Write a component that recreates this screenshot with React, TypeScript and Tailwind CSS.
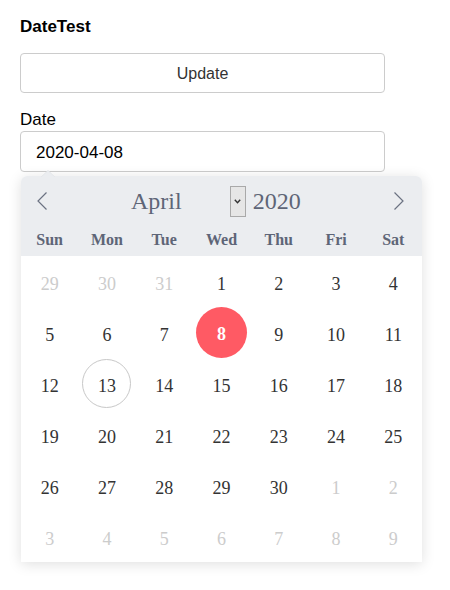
import React from "react";

const weekdays = ["Sun", "Mon", "Tue", "Wed", "Thu", "Fri", "Sat"];

type Day = { n: number; muted?: boolean };

const days: Day[] = [
  { n: 29, muted: true },
  { n: 30, muted: true },
  { n: 31, muted: true },
  ...Array.from({ length: 30 }, (_, i) => ({ n: i + 1 })),
  ...Array.from({ length: 9 }, (_, i) => ({ n: i + 1, muted: true })),
];

function Chevron({ dir }: { dir: "left" | "right" }) {
  return (
    <svg width="10" height="18" viewBox="0 0 10 18" fill="none" className="shrink-0">
      <path
        d={dir === "left" ? "M9.5 0.5 L1 9 L9.5 17.5" : "M0.5 0.5 L9 9 L0.5 17.5"}
        stroke="#6b7282"
        strokeWidth="1.2"
      />
    </svg>
  );
}

export default function App() {
  return (
    <div className="min-h-screen bg-white px-5 pt-[17px] font-['Liberation_Sans',Arial,sans-serif]">
      <h1 className="text-[17px] font-bold leading-5 text-black">DateTest</h1>

      <button
        type="button"
        className="mt-4 flex h-10 w-[365px] items-center justify-center rounded border border-[#cccccc] bg-white pt-[2px] text-[16px] text-[#333333]"
      >
        Update
      </button>

      <label className="mt-[17px] block text-[17px] leading-5 text-black">Date</label>
      <div className="mt-px flex h-[41px] w-[365px] items-center rounded border border-[#cccccc] bg-white pl-[15px] pt-[2px] text-[17px] text-black">
        2020-04-08
      </div>

      <div className="relative ml-px mt-1 w-[401px] rounded-t-md bg-white shadow-[0_2px_14px_rgba(0,0,0,0.13)] font-['Liberation_Serif','Times_New_Roman',serif]">
        <svg
          width="16"
          height="8"
          viewBox="0 0 16 8"
          className="absolute -top-[6px] left-[19px]"
        >
          <path d="M0 8 L8 0.5 L16 8 Z" fill="#ebedf0" stroke="#e2e4e8" strokeWidth="0.8" />
          <rect x="0" y="7" width="16" height="1.5" fill="#ebedf0" />
        </svg>

        <div className="rounded-t-md bg-[#ebedf0]">
          <div className="flex h-[48px] items-center pl-4 pr-[18px] pt-[2px]">
            <Chevron dir="left" />
            <span className="ml-[84px] text-[24px] leading-none text-[#5e6577]">April</span>
            <span className="ml-[48px] flex h-[31px] w-4 items-center justify-center border border-[#a9a9a9] bg-[#e6e6e6]">
              <svg width="7" height="5" viewBox="0 0 7 5">
                <path d="M0.8 0.8 L3.5 3.8 L6.2 0.8" stroke="#333" strokeWidth="1.4" fill="none" />
              </svg>
            </span>
            <span className="ml-[7px] text-[24px] leading-none text-[#5e6577]">2020</span>
            <div className="flex-1" />
            <Chevron dir="right" />
          </div>
          <div className="grid h-[32px] grid-cols-7 items-center">
            {weekdays.map((w) => (
              <span key={w} className="text-center text-[16px] font-bold text-[#5e6577]">
                {w}
              </span>
            ))}
          </div>
        </div>

        <div className="grid grid-cols-7">
          {days.map((d, i) => {
            const selected = !d.muted && d.n === 8;
            const today = !d.muted && d.n === 13;
            return (
              <div key={i} className="flex h-[51px] items-center justify-center">
                <span
                  className={`flex items-center justify-center rounded-full text-[18px] ${
                    selected
                      ? "h-[51px] w-[51px] bg-[#ff5a64] pt-[3px] font-bold text-white"
                      : today
                        ? "h-[49px] w-[49px] border border-[#c8c8c8] pt-[5px] text-[#333333]"
                        : d.muted
                          ? "pt-[5px] text-[#cccccc]"
                          : "pt-[5px] text-[#333333]"
                  }`}
                >
                  {d.n}
                </span>
              </div>
            );
          })}
        </div>
      </div>
    </div>
  );
}
